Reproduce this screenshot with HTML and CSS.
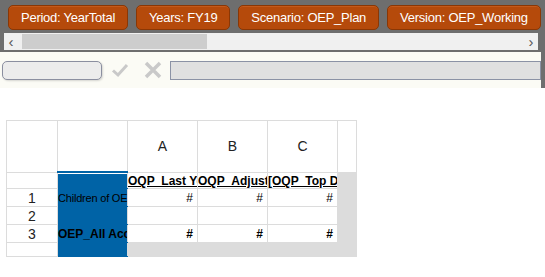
FILE: index.html
```html
<!DOCTYPE html>
<html lang="en">
<head>
    <meta charset="UTF-8">
    <meta name="viewport" content="width=device-width, initial-scale=1.0">
    <title>Form - OEP_Working</title>
    <link rel="stylesheet" href="styles.css">
</head>
<body>
    <div class="pov-bar">
        <div class="pov-buttons">
            <button class="pov-btn">Period: YearTotal</button>
            <button class="pov-btn">Years: FY19</button>
            <button class="pov-btn">Scenario: OEP_Plan</button>
            <button class="pov-btn">Version: OEP_Working</button>
        </div>
        <div class="hscroll">
            <span class="arrow">&#8249;</span>
            <div class="track"><div class="thumb"></div></div>
            <span class="arrow">&#8250;</span>
        </div>
    </div>

    <div class="formula-bar">
        <div class="cell-name"></div>
        <svg class="tool-icon" width="18" height="18" viewBox="0 0 18 18">
            <path d="M2 9.5 L7 14 L16 4" fill="none" stroke="#c9c9c9" stroke-width="3"/>
        </svg>
        <svg class="tool-icon" width="18" height="18" viewBox="0 0 18 18">
            <path d="M2 2 L16 16 M16 2 L2 16" fill="none" stroke="#c9c9c9" stroke-width="3.5"/>
        </svg>
        <div class="cell-value"></div>
        <div class="edge"></div>
    </div>

    <div class="grid-area">
        <table class="sheet">
            <colgroup>
                <col class="c-num"><col class="c-mem"><col class="c-data"><col class="c-data"><col class="c-data"><col class="c-end">
            </colgroup>
            <tr class="r-head">
                <td></td><td></td><td class="col-letter">A</td><td class="col-letter">B</td><td class="col-letter">C</td><td></td>
            </tr>
            <tr class="r-names">
                <td></td><td class="member top"></td>
                <td class="name"><div class="clip">OQP_Last Year</div></td>
                <td class="name"><div class="clip">OQP_Adjustments</div></td>
                <td class="name"><div class="clip">[OQP_Top Down]</div></td>
                <td class="filler"></td>
            </tr>
            <tr>
                <td class="row-num">1</td><td class="member"><div class="clip">Children of OEP_All Accounts</div></td>
                <td class="val">#</td><td class="val">#</td><td class="val">#</td><td class="filler"></td>
            </tr>
            <tr>
                <td class="row-num">2</td><td class="member"></td>
                <td></td><td></td><td></td><td class="filler"></td>
            </tr>
            <tr>
                <td class="row-num">3</td><td class="member total"><div class="clip">OEP_All Accounts</div></td>
                <td class="val total">#</td><td class="val total">#</td><td class="val total">#</td><td class="filler"></td>
            </tr>
            <tr class="r-last">
                <td></td><td class="member"></td>
                <td class="filler"></td><td class="filler"></td><td class="filler"></td><td class="filler"></td>
            </tr>
        </table>
    </div>
</body>
</html>
```

FILE: styles.css
```css
body {
    margin: 0;
    background-color: #ffffff;
    font-family: 'Liberation Sans', Arial, sans-serif;
    color: #000;
}
.pov-bar {
    background-color: #6e6e6e;
    padding: 5px 4px 2px 4px;
}
.pov-buttons {
    display: flex;
    gap: 8px;
    padding-left: 4px;
    height: 25px;
}
.pov-btn {
    height: 25px;
    padding: 0 12px;
    font-family: 'Liberation Sans', Arial, sans-serif;
    font-size: 13px;
    letter-spacing: -0.25px;
    color: #ffffff;
    background-color: #b54a0b;
    border: 1px solid #8a3705;
    border-radius: 5px;
    box-shadow: inset 0 1px 0 #c45a1c;
}
.hscroll {
    display: flex;
    align-items: center;
    height: 17px;
    margin-top: 3px;
    background-color: #f0f0f0;
    border-right: 3px solid #6e6e6e;
}
.arrow {
    width: 14px;
    text-align: center;
    font-size: 15px;
    line-height: 15px;
    color: #555;
}
.track {
    flex: 1;
    height: 15px;
    padding-left: 4px;
}
.thumb {
    width: 185px;
    height: 15px;
    background-color: #cdcdcd;
}
.formula-bar {
    display: flex;
    align-items: center;
    height: 36px;
    background-color: #fbfbf5;
    padding-left: 2px;
}
.cell-name {
    width: 98px;
    height: 17px;
    background-color: #ececec;
    border: 1px solid #8b8fa0;
    border-radius: 5px;
    box-shadow: 1px 1px 2px rgba(0,0,0,0.15);
}
.tool-icon {
    margin-left: 9px;
    margin-right: 6px;
}
.cell-value {
    flex: 1;
    height: 17px;
    margin-left: 2px;
    background-color: #e0e0e0;
    border: 1px solid #8b92a5;
}
.edge {
    width: 4px;
    height: 36px;
    background-color: #6e6e6e;
}
.grid-area {
    padding: 32px 0 0 6px;
}
.sheet {
    border-collapse: collapse;
    table-layout: fixed;
    width: 350px;
}
.sheet td {
    border: 1px solid #dcdcdc;
    height: 17px;
    padding: 0;
    overflow: hidden;
    white-space: nowrap;
    font-size: 12px;
}
.clip {
    overflow: hidden;
    white-space: nowrap;
    width: 100%;
}
.c-num { width: 51px; }
.c-mem { width: 70px; }
.c-data { width: 70px; }
.c-end { width: 19px; }
.r-head td {
    height: 50px;
}
.r-names td {
    height: 15px;
}
.r-last td {
    height: 13px;
}
.col-letter {
    text-align: center;
    font-size: 14px !important;
    color: #222;
}
.row-num {
    text-align: center;
    font-size: 14px !important;
    color: #222;
}
.sheet td.member {
    background-color: #0063a6;
    border-top-color: #0063a6;
    border-bottom-color: #0063a6;
    font-size: 11px;
    letter-spacing: -0.2px;
}
.sheet td.member.top {
    box-shadow: inset 0 1px 0 #ffffff;
    border-top: 2px solid #0063a6;
}
.sheet td.member.total {
    font-size: 12px;
    letter-spacing: 0;
}
.name {
    font-weight: bold;
    text-decoration: underline;
    vertical-align: bottom;
}
.val {
    text-align: right;
    padding-right: 4px !important;
}
.total {
    font-weight: bold;
}
.sheet td.filler {
    background-color: #dcdcdc;
    border-color: #dcdcdc;
}
```
